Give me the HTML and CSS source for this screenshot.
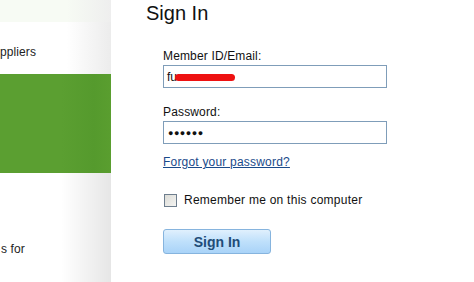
FILE: index.html
```html
<!DOCTYPE html>
<html>
<head>
<meta charset="utf-8">
<link rel="stylesheet" href="styles.css">
</head>
<body>
<div class="page">
  <aside class="side">
    <div class="side-top"></div>
    <div class="side-row"><span class="side-text">ppliers</span></div>
    <div class="side-green"></div>
    <div class="side-bottom"><span class="side-text">s for</span></div>
  </aside>
  <main class="main">
    <h1 class="title">Sign In</h1>
    <form class="form">
      <label class="label">Member ID/Email:</label>
      <div class="input"><span class="typed">fu</span><span class="scribble"></span></div>
      <label class="label label-pw">Password:</label>
      <div class="input"><span class="dots">&#9679;&#9679;&#9679;&#9679;&#9679;&#9679;</span></div>
      <a class="forgot" href="#">Forgot your password?</a>
      <div class="remember"><span class="check"></span><span>Remember me on this computer</span></div>
      <button type="button" class="btn">Sign In</button>
    </form>
  </main>
</div>
</body>
</html>
```

FILE: styles.css
```css
html, body {
  margin: 0;
  padding: 0;
  background: #fff;
  font-family: "Liberation Sans", Arial, sans-serif;
  color: #111;
}
.page {
  display: flex;
  width: 474px;
  height: 282px;
  overflow: hidden;
}
.side {
  width: 111px;
  flex: none;
  display: flex;
  flex-direction: column;
  background: linear-gradient(to right, #ffffff 0%, #ffffff 55%, #ebebeb 100%);
}
.side-top {
  height: 22px;
  background: linear-gradient(to right, #f7fbf4 0%, #f7fbf4 60%, #eeeeee 100%);
}
.side-row {
  height: 52px;
  display: flex;
  align-items: flex-start;
  padding-top: 23px;
  box-sizing: border-box;
  background: linear-gradient(to right, #ffffff 0%, #ffffff 60%, #ececec 100%);
}
.side-text {
  font-size: 12px;
  color: #222;
  letter-spacing: 0.1px;
}
.side-green {
  height: 99px;
  background: linear-gradient(to right, #5b9f31 0%, #5b9f31 55%, #559a2d 85%, #5a9e2f 100%);
}
.side-bottom {
  flex: 1;
  padding-top: 66px;
  padding-left: 1px;
  background: linear-gradient(to right, #ffffff 0%, #ffffff 55%, #e6e6e6 100%);
}
.main {
  flex: 1;
  padding-left: 35px;
}
.title {
  margin: 2px 0 0 0;
  font-size: 20px;
  font-weight: normal;
  color: #111;
  line-height: 23px;
}
.form {
  margin: 24px 0 0 17px;
  display: flex;
  flex-direction: column;
  align-items: flex-start;
}
.label {
  font-size: 12px;
  line-height: 14px;
  color: #111;
  margin-bottom: 2px;
  letter-spacing: 0.15px;
}
.label-pw {
  margin-top: 17px;
}
.input {
  border: 1px solid #7f9db9;
  display: flex;
  align-items: center;
  padding-left: 3px;
  box-sizing: border-box;
  width: 224px;
  height: 23px;
}
.typed {
  font-size: 12px;
  color: #111;
}
.scribble {
  display: inline-block;
  width: 60px;
  height: 7px;
  background: #ee1111;
  border-radius: 4px;
  margin-left: -2px;
  margin-top: 2px;
}
.dots {
  font-size: 9px;
  letter-spacing: 0.5px;
  color: #111;
  margin-left: 1px;
}
.forgot {
  margin-top: 11px;
  font-size: 12px;
  line-height: 14px;
  color: #1a4a8a;
  text-decoration: underline;
  letter-spacing: 0.2px;
}
.remember {
  margin-top: 24px;
  display: flex;
  align-items: center;
  font-size: 12px;
  color: #111;
  letter-spacing: 0.25px;
}
.check {
  width: 11px;
  height: 11px;
  border: 1px solid #6e7e8e;
  background: linear-gradient(135deg, #dcdcd7 0%, #f4f4f2 100%);
  margin: 0 7px 0 1px;
}
.btn {
  margin-top: 22px;
  width: 108px;
  height: 25px;
  border: 1px solid #86b4de;
  border-radius: 3px;
  background: linear-gradient(to bottom, #e0f0fd 0%, #bfe0fb 50%, #a9d3f8 100%);
  font-family: "Liberation Sans", Arial, sans-serif;
  font-weight: bold;
  font-size: 14px;
  color: #1f4c78;
  padding: 0;
  cursor: pointer;
}
```
